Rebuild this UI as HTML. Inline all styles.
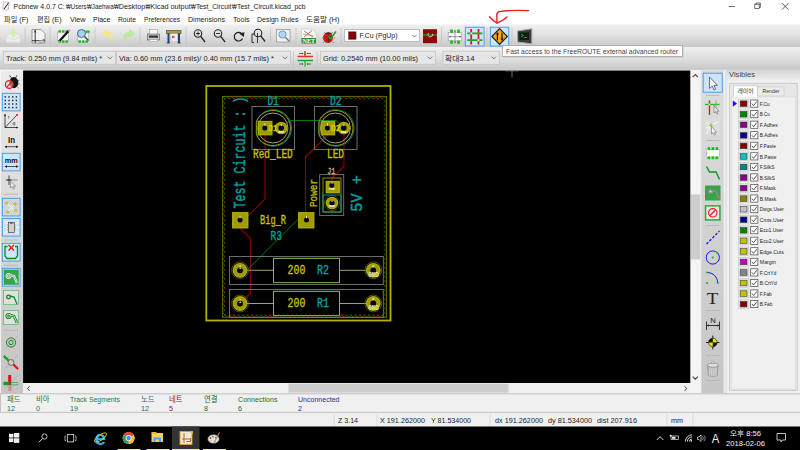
<!DOCTYPE html>
<html lang="ko"><head><meta charset="utf-8"><title>Pcbnew 4.0.7</title>
<style>
html,body{margin:0;padding:0;background:#000;overflow:hidden}
svg{display:block;font-family:"Liberation Sans", "Noto Sans CJK KR", sans-serif;}
text{white-space:pre}
</style></head><body>
<svg width="800" height="450" viewBox="0 0 800 450">
<defs>
<linearGradient id="tb" x1="0" y1="0" x2="0" y2="1"><stop offset="0" stop-color="#f1f1f1"/><stop offset="0.5" stop-color="#dfdfdf"/><stop offset="1" stop-color="#c7c7c7"/></linearGradient>
<linearGradient id="vtb" x1="0" y1="0" x2="0" y2="1"><stop offset="0" stop-color="#ececec"/><stop offset="1" stop-color="#c4c4c4"/></linearGradient>
<linearGradient id="vtb2" x1="0" y1="0" x2="0" y2="1"><stop offset="0" stop-color="#dddddd"/><stop offset="1" stop-color="#c6c6c6"/></linearGradient>
<linearGradient id="cap" x1="0" y1="0" x2="0" y2="1"><stop offset="0" stop-color="#d4d4d4"/><stop offset="1" stop-color="#eeeeee"/></linearGradient>
<pattern id="hatch" width="4.5" height="4.5" patternUnits="userSpaceOnUse"><rect width="4.5" height="4.5" fill="#000"/><path d="M0 4.5L4.5 0" stroke="#a80000" stroke-width="0.9"/><path d="M0 0L4.5 4.5" stroke="#009800" stroke-width="0.9"/></pattern>
</defs>
<rect x="0" y="0" width="800" height="450" fill="#f0f0f0"/>
<rect x="0" y="24" width="800" height="23.5" fill="url(#tb)"/>
<rect x="0" y="47" width="800" height="22.8" fill="url(#tb)"/>
<rect x="0" y="0" width="800" height="24.4" fill="#fff"/>
<rect x="0" y="69.8" width="24" height="324" fill="url(#vtb)"/>
<rect x="0" y="69.8" width="24" height="0.9" fill="#f8f8f8"/>
<rect x="0" y="69.8" width="0.9" height="323.7" fill="#f4f4f4"/>
<rect x="23" y="382" width="668" height="11.2" fill="#f0f0f0"/>
<rect x="288.5" y="383.8" width="220" height="8.8" fill="#cdcdcd"/>
<rect x="689" y="70" width="12" height="323.2" fill="#f4f4f4"/>
<rect x="691" y="194.4" width="9.3" height="65" fill="#cdcdcd"/>
<rect x="701" y="70" width="22.8" height="323.2" fill="url(#vtb2)"/>
<rect x="723.8" y="70" width="76.2" height="324.5" fill="#f0f0f0"/>
<rect x="23.1" y="70.5" width="667.2" height="312.5" fill="#000"/>
<rect x="0" y="393.5" width="800" height="33.5" fill="#f0f0f0"/>
<rect x="0" y="426.5" width="800" height="23.5" fill="#000"/>
<g id="pcb">
<rect x="206.3" y="86" width="184.2" height="234.5" fill="none" stroke="#b4b000" stroke-width="1.8"/>
<path d="M222 96H387V317.6H222Z M225.2 99.2V314.400H383.8V99.2Z" fill="url(#hatch)" fill-rule="evenodd" opacity="0.9"/>
<rect x="222.4" y="96.4" width="164.2" height="220.8" fill="none" stroke="#706c00" stroke-width="0.9"/>
<path d="M265 128V199L247 217H240" fill="none" stroke="#880000" stroke-width="1.15" stroke-linejoin="round"/>
<path d="M240 221V228L250.5 238.5V293L245 298.5L240 303.5" fill="none" stroke="#880000" stroke-width="1.15" stroke-linejoin="round"/>
<path d="M327.5 128V135L305.5 157V219" fill="none" stroke="#880000" stroke-width="1.15" stroke-linejoin="round"/>
<path d="M344 128V166L332 178V186" fill="none" stroke="#880000" stroke-width="1.15" stroke-linejoin="round"/>
<path d="M281 128L286.5 123L291 120.5H336L340.5 124.5L344 128" fill="none" stroke="#008800" stroke-width="0.9"/>
<path d="M306.5 220L298 219.4L247 270.3H240" fill="none" stroke="#008800" stroke-width="0.9"/>
<rect x="252" y="106.5" width="42.5" height="43" fill="none" stroke="#787878" stroke-width="0.9"/>
<rect x="314.5" y="106.5" width="42.5" height="43" fill="none" stroke="#787878" stroke-width="0.9"/>
<rect x="319.7" y="174.6" width="24" height="40.8" fill="none" stroke="#787878" stroke-width="0.9"/>
<rect x="229.5" y="256.5" width="153.8" height="28" fill="none" stroke="#787878" stroke-width="0.9"/>
<rect x="229.5" y="289.5" width="153.8" height="28" fill="none" stroke="#787878" stroke-width="0.9"/>
<path d="M256.7 120.3A18.3 18.3 0 1 1 256.7 135.7Z" fill="none" stroke="#008484" stroke-width="0.9"/>
<path d="M256.3 122.2A17.6 17.6 0 1 1 256.3 133.8Z" fill="none" stroke="#989800" stroke-width="1"/>
<circle cx="272.9" cy="128" r="15" fill="none" stroke="#b4b47a" stroke-width="0.9"/>
<path d="M319.2 120.3A18.3 18.3 0 1 1 319.2 135.7Z" fill="none" stroke="#008484" stroke-width="0.9"/>
<path d="M318.8 122.2A17.6 17.6 0 1 1 318.8 133.8Z" fill="none" stroke="#989800" stroke-width="1"/>
<circle cx="335.4" cy="128" r="15" fill="none" stroke="#b4b47a" stroke-width="0.9"/>
<rect x="257.6" y="120.8" width="15" height="14.6" fill="#a09c00"/>
<rect x="258.6" y="121.8" width="13" height="12.6" fill="none" stroke="#b8b400" stroke-width="0.6"/>
<circle cx="264.8" cy="127.9" r="2.5" fill="#000024"/>
<circle cx="281.2" cy="128" r="6.3" fill="#a09c00"/>
<circle cx="281.2" cy="128" r="5.5" fill="none" stroke="#c0bc10" stroke-width="0.5"/>
<circle cx="281.2" cy="128" r="2.8" fill="#000024"/>
<rect x="320.7" y="120.8" width="14.6" height="14.6" fill="#a09c00"/>
<rect x="321.7" y="121.8" width="12.6" height="12.6" fill="none" stroke="#b8b400" stroke-width="0.6"/>
<circle cx="327.4" cy="127.9" r="2.5" fill="#000024"/>
<circle cx="343.8" cy="128" r="6.3" fill="#a09c00"/>
<circle cx="343.8" cy="128" r="5.5" fill="none" stroke="#c0bc10" stroke-width="0.5"/>
<circle cx="343.8" cy="128" r="2.8" fill="#000024"/>
<rect x="323" y="178" width="18" height="34" fill="none" stroke="#a0a000" stroke-width="0.9"/>
<rect x="323" y="195" width="18" height="17" fill="none" stroke="#009c9c" stroke-width="0.9"/>
<rect x="325.6" y="180.8" width="14.4" height="12.6" fill="#a09c00"/>
<rect x="326.6" y="181.8" width="12.4" height="10.6" fill="none" stroke="#b8b400" stroke-width="0.6"/>
<circle cx="331.8" cy="185.3" r="2.5" fill="#000024"/>
<circle cx="332" cy="203" r="6.3" fill="#a09c00"/>
<circle cx="332" cy="203" r="5.5" fill="none" stroke="#c0bc10" stroke-width="0.5"/>
<circle cx="332" cy="203" r="2.6" fill="#000024"/>
<circle cx="332" cy="203" r="7.6" fill="none" stroke="#6a6a00" stroke-width="0.6"/>
<rect x="232" y="212" width="16.5" height="16.5" fill="#a09c00"/>
<rect x="233" y="213" width="14.5" height="14.5" fill="none" stroke="#b8b400" stroke-width="0.6"/>
<circle cx="240" cy="220" r="2.5" fill="#000024"/>
<rect x="298" y="212" width="16.5" height="16.5" fill="#a09c00"/>
<rect x="299" y="213" width="14.5" height="14.5" fill="none" stroke="#b8b400" stroke-width="0.6"/>
<circle cx="306.5" cy="220" r="2.5" fill="#000024"/>
<line x1="240" y1="270.3" x2="273.5" y2="270.3" stroke="#b4b47a" stroke-width="0.9" />
<line x1="339.5" y1="270.3" x2="373" y2="270.3" stroke="#b4b47a" stroke-width="0.9" />
<rect x="273.5" y="258.5" width="66" height="24" fill="none" stroke="#b4b47a" stroke-width="0.9"/>
<line x1="273.5" y1="258.2" x2="339.5" y2="258.2" stroke="#40a040" stroke-width="0.8" />
<line x1="273.5" y1="282.7" x2="339.5" y2="282.7" stroke="#40a040" stroke-width="0.7" />
<circle cx="240" cy="270.3" r="8.4" fill="none" stroke="#707000" stroke-width="0.7"/>
<circle cx="240" cy="270.3" r="7.4" fill="#a09c00"/>
<circle cx="240" cy="270.3" r="6.6000000000000005" fill="none" stroke="#c0bc10" stroke-width="0.5"/>
<circle cx="240" cy="270.3" r="2.9" fill="#000024"/>
<circle cx="373.3" cy="270.3" r="8.4" fill="none" stroke="#707000" stroke-width="0.7"/>
<circle cx="373.3" cy="270.3" r="7.4" fill="#a09c00"/>
<circle cx="373.3" cy="270.3" r="6.6000000000000005" fill="none" stroke="#c0bc10" stroke-width="0.5"/>
<circle cx="373.3" cy="270.3" r="2.9" fill="#000024"/>
<line x1="240" y1="303.5" x2="273.5" y2="303.5" stroke="#b4b47a" stroke-width="0.9" />
<line x1="339.5" y1="303.5" x2="373" y2="303.5" stroke="#b4b47a" stroke-width="0.9" />
<rect x="273.5" y="291.5" width="66" height="24" fill="none" stroke="#b4b47a" stroke-width="0.9"/>
<line x1="273.5" y1="291.2" x2="339.5" y2="291.2" stroke="#40a040" stroke-width="0.8" />
<line x1="273.5" y1="315.7" x2="339.5" y2="315.7" stroke="#40a040" stroke-width="0.7" />
<circle cx="240" cy="303.5" r="8.4" fill="none" stroke="#707000" stroke-width="0.7"/>
<circle cx="240" cy="303.5" r="7.4" fill="#a09c00"/>
<circle cx="240" cy="303.5" r="6.6000000000000005" fill="none" stroke="#c0bc10" stroke-width="0.5"/>
<circle cx="240" cy="303.5" r="2.9" fill="#000024"/>
<circle cx="373.3" cy="303.5" r="8.4" fill="none" stroke="#707000" stroke-width="0.7"/>
<circle cx="373.3" cy="303.5" r="7.4" fill="#a09c00"/>
<circle cx="373.3" cy="303.5" r="6.6000000000000005" fill="none" stroke="#c0bc10" stroke-width="0.5"/>
<circle cx="373.3" cy="303.5" r="2.9" fill="#000024"/>
<text x="267.5" y="105.4" font-size="12" fill="#00a0a0" textLength="11.2" lengthAdjust="spacingAndGlyphs" font-family='"Liberation Mono", monospace'  stroke="#00a0a0" stroke-width="0.35" stroke-linejoin="round">D1</text>
<text x="330" y="105.4" font-size="12" fill="#00a0a0" textLength="11.6" lengthAdjust="spacingAndGlyphs" font-family='"Liberation Mono", monospace'  stroke="#00a0a0" stroke-width="0.35" stroke-linejoin="round">D2</text>
<text x="253" y="157.8" font-size="12" fill="#c2c200" textLength="39.8" lengthAdjust="spacingAndGlyphs" font-family='"Liberation Mono", monospace'  stroke="#c2c200" stroke-width="0.35" stroke-linejoin="round">Red_LED</text>
<text x="327" y="157.8" font-size="12" fill="#c2c200" textLength="17" lengthAdjust="spacingAndGlyphs" font-family='"Liberation Mono", monospace'  stroke="#c2c200" stroke-width="0.35" stroke-linejoin="round">LED</text>
<text x="327.3" y="174.3" font-size="9.8" fill="#c2c28a" textLength="8" lengthAdjust="spacingAndGlyphs" font-family='"Liberation Mono", monospace'  stroke="#c2c28a" stroke-width="0.3" stroke-linejoin="round">J1</text>
<text x="260" y="223.8" font-size="12" fill="#c2c200" textLength="26" lengthAdjust="spacingAndGlyphs" font-family='"Liberation Mono", monospace'  stroke="#c2c200" stroke-width="0.35" stroke-linejoin="round">Big_R</text>
<text x="270.6" y="240" font-size="12" fill="#00a0a0" textLength="11.3" lengthAdjust="spacingAndGlyphs" font-family='"Liberation Mono", monospace'  stroke="#00a0a0" stroke-width="0.35" stroke-linejoin="round">R3</text>
<text x="287.6" y="274" font-size="12" fill="#c2c200" textLength="17.8" lengthAdjust="spacingAndGlyphs" font-family='"Liberation Mono", monospace'  stroke="#c2c200" stroke-width="0.35" stroke-linejoin="round">200</text>
<text x="317" y="274" font-size="12" fill="#00a0a0" textLength="12" lengthAdjust="spacingAndGlyphs" font-family='"Liberation Mono", monospace'  stroke="#00a0a0" stroke-width="0.35" stroke-linejoin="round">R2</text>
<text x="287.6" y="307.2" font-size="12" fill="#c2c200" textLength="17.8" lengthAdjust="spacingAndGlyphs" font-family='"Liberation Mono", monospace'  stroke="#c2c200" stroke-width="0.35" stroke-linejoin="round">200</text>
<text x="317" y="307.2" font-size="12" fill="#00a0a0" textLength="12" lengthAdjust="spacingAndGlyphs" font-family='"Liberation Mono", monospace'  stroke="#00a0a0" stroke-width="0.35" stroke-linejoin="round">R1</text>
<text x="317" y="207" font-size="11" fill="#c2c200" textLength="28" lengthAdjust="spacingAndGlyphs" font-family='"Liberation Mono", monospace' transform="rotate(-90 317 207)" stroke="#c2c200" stroke-width="0.3" stroke-linejoin="round">Power</text>
<text x="362" y="211.7" font-size="16.6" fill="#00a0a0" textLength="36.7" lengthAdjust="spacingAndGlyphs" font-family='"Liberation Mono", monospace' transform="rotate(-90 362 211.7)" stroke="#00a0a0" stroke-width="0.45" stroke-linejoin="round">5V +</text>
<text x="244.8" y="208.5" font-size="16.8" fill="#00a0a0" textLength="112" lengthAdjust="spacingAndGlyphs" font-family='"Liberation Mono", monospace' transform="rotate(-90 244.8 208.5)" stroke="#00a0a0" stroke-width="0.45" stroke-linejoin="round">Test Circuit : )</text>
<text x="268.6" y="131.3" font-size="9" fill="#d2d200" textLength="8.6" lengthAdjust="spacingAndGlyphs" font-family='"Liberation Mono", monospace'  stroke="#d2d200" stroke-width="0.4" stroke-linejoin="round">D1</text>
<text x="331.2" y="131.3" font-size="9" fill="#d2d200" textLength="9.2" lengthAdjust="spacingAndGlyphs" font-family='"Liberation Mono", monospace'  stroke="#d2d200" stroke-width="0.4" stroke-linejoin="round">D2</text>
<text x="373.3" y="266.7" font-size="4.2" fill="#f0f0e0" text-anchor="middle" font-weight="bold" font-family='"Liberation Mono", monospace'>2</text>
<text x="373.5" y="276.90000000000003" font-size="6.4" fill="#e6e6b4" textLength="10.6" lengthAdjust="spacingAndGlyphs" text-anchor="middle" font-weight="bold" font-family='"Liberation Mono", monospace'>GND</text>
<text x="373.3" y="299.9" font-size="4.2" fill="#f0f0e0" text-anchor="middle" font-weight="bold" font-family='"Liberation Mono", monospace'>2</text>
<text x="373.5" y="310.1" font-size="6.4" fill="#e6e6b4" textLength="10.6" lengthAdjust="spacingAndGlyphs" text-anchor="middle" font-weight="bold" font-family='"Liberation Mono", monospace'>GND</text>
<text x="240" y="269.3" font-size="4.5" fill="#fff" text-anchor="middle" font-family='"Liberation Mono", monospace'>1</text>
<text x="240" y="302.5" font-size="4.5" fill="#fff" text-anchor="middle" font-family='"Liberation Mono", monospace'>1</text>
<text x="332" y="201.5" font-size="3.5" fill="#fff" text-anchor="middle" font-family='"Liberation Mono", monospace'>2</text>
<text x="332" y="206.5" font-size="3.5" fill="#fff" textLength="6.5" lengthAdjust="spacingAndGlyphs" text-anchor="middle" font-weight="bold" font-family='"Liberation Mono", monospace'>GND</text>
<text x="331.8" y="184" font-size="3.5" fill="#fff" text-anchor="middle" font-family='"Liberation Mono", monospace'>1</text>
<text x="331.8" y="189.5" font-size="3.2" fill="#fff" textLength="6" lengthAdjust="spacingAndGlyphs" text-anchor="middle" font-weight="bold" font-family='"Liberation Mono", monospace'>PWR</text>
<rect x="264.40000000000003" y="123.3" width="0.9" height="2.4" fill="#e8e8e8"/>
<rect x="327.0" y="123.3" width="0.9" height="2.4" fill="#e8e8e8"/>
<rect x="280.8" y="123.8" width="0.9" height="2.4" fill="#e8e8e8"/>
<rect x="343.40000000000003" y="123.8" width="0.9" height="2.4" fill="#e8e8e8"/>
<rect x="239.6" y="215.8" width="0.9" height="2.4" fill="#e8e8e8"/>
<rect x="306.1" y="215.8" width="0.9" height="2.4" fill="#e8e8e8"/>
<text x="281.2" y="132.5" font-size="3" fill="#fff" textLength="6" lengthAdjust="spacingAndGlyphs" text-anchor="middle" font-weight="bold" font-family='"Liberation Mono", monospace'>GND</text>
<text x="343.8" y="132.5" font-size="3" fill="#fff" textLength="6" lengthAdjust="spacingAndGlyphs" text-anchor="middle" font-weight="bold" font-family='"Liberation Mono", monospace'>GND</text>
<line x1="505" y1="70.8" x2="519" y2="70.8" stroke="#8a8a8a" stroke-width="0.8" />
<line x1="512" y1="70.5" x2="512" y2="77.5" stroke="#8a8a8a" stroke-width="0.8" />
</g>
<g id="main-toolbar">
<line x1="25" y1="27.5" x2="25" y2="44.5" stroke="#c4c4c4" stroke-width="0.8" />
<line x1="50" y1="27.5" x2="50" y2="44.5" stroke="#c4c4c4" stroke-width="0.8" />
<line x1="95" y1="27.5" x2="95" y2="44.5" stroke="#c4c4c4" stroke-width="0.8" />
<line x1="140" y1="27.5" x2="140" y2="44.5" stroke="#c4c4c4" stroke-width="0.8" />
<line x1="186" y1="27.5" x2="186" y2="44.5" stroke="#c4c4c4" stroke-width="0.8" />
<line x1="270.5" y1="27.5" x2="270.5" y2="44.5" stroke="#c4c4c4" stroke-width="0.8" />
<line x1="296" y1="27.5" x2="296" y2="44.5" stroke="#c4c4c4" stroke-width="0.8" />
<line x1="341" y1="27.5" x2="341" y2="44.5" stroke="#c4c4c4" stroke-width="0.8" />
<line x1="441.5" y1="27.5" x2="441.5" y2="44.5" stroke="#c4c4c4" stroke-width="0.8" />
<line x1="487" y1="27.5" x2="487" y2="44.5" stroke="#c4c4c4" stroke-width="0.8" />
<line x1="512" y1="27.5" x2="512" y2="44.5" stroke="#c4c4c4" stroke-width="0.8" />
<path d="M6.200 37.5L8.800 33.5H17.700L20.300 37.5V41.500Q20.300 42.500 19.300 42.500H7.200Q6.200 42.500 6.200 41.500Z" fill="#ececec" stroke="#d8d8d8" stroke-width="0.6"/>
<path d="M11.300 28.800H15.300V32.600H17.800L13.300 37.300L8.800 32.600H11.300Z" fill="#d4ecb8"/>
<path d="M6.500 38H10.500L11.300 39.500H15.300L16 38H20" fill="none" stroke="#dcdcdc" stroke-width="0.6"/>
<path d="M32 29.5H41L45 33.5V43H32Z" fill="#f4f4f4" stroke="#777" stroke-width="0.7"/>
<path d="M35.200 30V43M32 40.700H45" fill="none" stroke="#222" stroke-width="0.9"/>
<path d="M35 30.5L34 32.5M35 30.5L36 32.5M44.5 40L42.5 39M44.5 40L42.5 41" fill="none" stroke="#222" stroke-width="0.6"/>
<rect x="39.5" y="40.5" width="4.5" height="2" fill="#ccc" stroke="#888" stroke-width="0.4"/>
<rect x="57.5" y="32" width="11" height="9" fill="#f4f4f4" stroke="#999" stroke-width="0.5"/>
<rect x="58.5" y="30.2" width="2.4" height="2.4" fill="#10c010"/>
<rect x="58.5" y="40.4" width="2.4" height="2.4" fill="#10c010"/>
<rect x="62" y="30.2" width="2.4" height="2.4" fill="#10c010"/>
<rect x="62" y="40.4" width="2.4" height="2.4" fill="#10c010"/>
<rect x="65.5" y="30.2" width="2.4" height="2.4" fill="#10c010"/>
<rect x="65.5" y="40.4" width="2.4" height="2.4" fill="#10c010"/>
<path d="M59 41.5L68.5 31" fill="none" stroke="#111" stroke-width="2.2"/>
<circle cx="69" cy="30.6" r="1.2" fill="#e070d0"/>
<path d="M58 42.6L59.6 40.4L60.6 41.6Z" fill="#f0e070"/>
<rect x="77.5" y="33" width="11" height="8" fill="#f4f4f4" stroke="#999" stroke-width="0.5"/>
<rect x="78.5" y="40.4" width="2.4" height="2.4" fill="#10c010"/>
<rect x="82" y="40.4" width="2.4" height="2.4" fill="#10c010"/>
<rect x="85.5" y="40.4" width="2.4" height="2.4" fill="#10c010"/>
<rect x="85.5" y="30.4" width="2.4" height="2.4" fill="#10c010"/>
<rect x="88" y="30.4" width="1.6" height="2.4" fill="#10c010"/>
<circle cx="81.5" cy="33.5" r="4" fill="#a8d0f0" stroke="#3a6a9a" stroke-width="1"/>
<line x1="84.5" y1="36.5" x2="88.5" y2="40.5" stroke="#444" stroke-width="1.4" />
<path d="M102 33.5L107 29.5V32C111.5 32 113.5 35.5 112 41.5C111.5 38 110 36 107 36V38Z" fill="#f3e88c" stroke="#efe070" stroke-width="0.4"/>
<path d="M134.5 33.5L129.5 29.5V32C125 32 123 35.5 124.5 41.5C125 38 126.500 36 129.5 36V38Z" fill="#bfeaa0" stroke="#aee090" stroke-width="0.4"/>
<rect x="149.5" y="29.5" width="8" height="5" fill="#fafafa" stroke="#888" stroke-width="0.5"/>
<rect x="147.5" y="34" width="12" height="6" fill="#c8c8c8" stroke="#555" stroke-width="0.6"/>
<rect x="149" y="35.5" width="9" height="2.2" fill="#333"/>
<rect x="149.5" y="39.5" width="8" height="2.2" fill="#f4f4f4" stroke="#888" stroke-width="0.4"/>
<rect x="166.5" y="30.5" width="14.5" height="3" fill="#a09c50" stroke="#55521c" stroke-width="0.7"/>
<rect x="167.5" y="33.5" width="2" height="9.5" fill="#24406c"/>
<rect x="178" y="33.5" width="2" height="9.5" fill="#24406c"/>
<rect x="166.8" y="42.4" width="3.4" height="1" fill="#24406c"/>
<rect x="177.3" y="42.4" width="3.4" height="1" fill="#24406c"/>
<path d="M170.5 33.5H177.5V41.5H173L170.5 39Z" fill="#f0f0f0" stroke="#aaa" stroke-width="0.4"/>
<path d="M172 35.5L175.5 37L172 38.5Z" fill="#d04050"/>
<circle cx="198" cy="33.5" r="3.7" fill="none" stroke="#222" stroke-width="1.1"/>
<line x1="200.59" y1="36.09" x2="205" y2="42" stroke="#222" stroke-width="1.3" />
<path d="M196 33.5H200M198 31.5V35.5" fill="none" stroke="#222" stroke-width="0.9"/>
<circle cx="218" cy="33.5" r="3.7" fill="none" stroke="#222" stroke-width="1.1"/>
<line x1="220.59" y1="36.09" x2="225" y2="42" stroke="#222" stroke-width="1.3" />
<path d="M216 33.5H220" fill="none" stroke="#222" stroke-width="0.9"/>
<path d="M241.5 33.5A4.3 4.3 0 1 0 242.5 38.5" fill="none" stroke="#222" stroke-width="1.2"/>
<path d="M239 33.5L244.5 32.2L243.8 37Z" fill="#222"/>
<circle cx="258" cy="33" r="3.8" fill="none" stroke="#222" stroke-width="1.1"/>
<line x1="260.66" y1="35.66" x2="265" y2="41.5" stroke="#222" stroke-width="1.3" />
<path d="M254 34H252V42.5H254M257.5 33V43" fill="none" stroke="#222" stroke-width="0.9"/>
<rect x="276.5" y="29.5" width="13.5" height="12.5" fill="#f0f0f0" stroke="#9a9a9a" stroke-width="0.8"/>
<circle cx="282.5" cy="34.5" r="3.6" fill="#b4d4f4" stroke="#6a8ab0" stroke-width="0.8"/>
<line x1="285.3" y1="37.3" x2="289.3" y2="41.3" stroke="#777" stroke-width="1.3" />
<path d="M301.5 29H312L316 32.5V43.5H301.5Z" fill="#f8f8f8" stroke="#bbb" stroke-width="0.5"/>
<path d="M304 31L313 37M304 37L312 30.5" fill="none" stroke="#c03030" stroke-width="0.7"/>
<line x1="303" y1="34" x2="314" y2="36" stroke="#40a040" stroke-width="0.5" />
<rect x="301.5" y="38" width="14.5" height="5.5" fill="#2e8a3a"/>
<text x="308.8" y="42.8" font-size="5.6" fill="#fff" textLength="12.5" lengthAdjust="spacingAndGlyphs" text-anchor="middle" font-weight="bold" font-family='"Liberation Serif", serif'>NET</text>
<ellipse cx="328" cy="37.8" rx="5" ry="5.3" fill="#d81818"/>
<path d="M324.5 33.8A4.6 3 0 0 1 332.5 33.8Z" fill="#222"/>
<line x1="328.5" y1="34" x2="328.5" y2="42.5" stroke="#222" stroke-width="0.6" />
<circle cx="326.5" cy="37" r="0.7" fill="#222"/>
<circle cx="330.5" cy="37" r="0.7" fill="#222"/>
<circle cx="326.8" cy="40" r="0.7" fill="#222"/>
<circle cx="330.2" cy="40" r="0.7" fill="#222"/>
<path d="M324 32L326 34M333 32L331 34M323.5 38H322M333.5 38H335M324.5 41.5L323 43M332.5 41.5L334 43" fill="none" stroke="#444" stroke-width="0.5"/>
<path d="M328.3 36L330.6 38.8L336 31.5" fill="none" stroke="#18a028" stroke-width="1.5"/>
<rect x="423" y="29.2" width="14" height="14" fill="#8c0a0a"/>
<line x1="423" y1="35" x2="437" y2="35" stroke="#18a018" stroke-width="1.4" />
<path d="M428.5 33.2A2.3 2.3 0 1 0 432.5 33.8" fill="none" stroke="#e8e8e8" stroke-width="0.8"/>
<rect x="448.2" y="32.6" width="13.4" height="8.2" fill="#fafafa" stroke="#9a9a9a" stroke-width="0.6"/>
<rect x="450.2" y="29.6" width="2.7" height="3.2" fill="#10c010"/>
<rect x="450.2" y="40.6" width="2.7" height="3.2" fill="#10c010"/>
<rect x="457.2" y="29.6" width="2.7" height="3.2" fill="#10c010"/>
<rect x="457.2" y="40.6" width="2.7" height="3.2" fill="#10c010"/>
<path d="M449 36.700H461M455 30.5V43" fill="none" stroke="#666" stroke-width="0.6"/>
<path d="M448.600 36.700L450.400 35.700V37.700ZM461.400 36.700L459.600 35.700V37.700ZM455 29.800L454 31.600H456ZM455 43.600L454 41.800H456Z" fill="#555"/>
<rect x="465.3" y="27.2" width="18.8" height="18.8" fill="#cfe4f7" stroke="#3b97e8" stroke-width="0.9"/>
<path d="M471.200 29V44.5M478.500 29V44.5" fill="none" stroke="#e01818" stroke-width="1.8"/>
<path d="M467.200 33.400H482.500M467.200 40.200H482.500" fill="none" stroke="#10b010" stroke-width="1.8"/>
<circle cx="471.2" cy="33.4" r="1.1" fill="#f4f4f4" stroke="#888" stroke-width="0.4"/>
<circle cx="478.5" cy="40.2" r="1.1" fill="#f4f4f4" stroke="#888" stroke-width="0.4"/>
<rect x="490.3" y="27.2" width="18.5" height="18.8" fill="#cfe4f7" stroke="#3b97e8" stroke-width="0.9"/>
<path d="M499.6 28.600L507.400 36.500L499.6 44.400L491.800 36.500Z" fill="#f4a81c" stroke="#1a1a1a" stroke-width="1.1"/>
<path d="M497.400 40.200V33.5M502 32.800V39.5" fill="none" stroke="#111" stroke-width="1.2"/>
<path d="M497.5 32L496 34.5H499ZM502 41L500.500 38.5H503.5Z" fill="#111"/>
<path d="M517.500 31L531.800 28.800V43.800L517.500 42Z" fill="#3c3c3c" stroke="#a4a4a4" stroke-width="1"/>
<rect x="519.5" y="32.5" width="9.5" height="7.5" fill="#0c1c0c"/>
<path d="M521 34L523.500 35.5L521 37M524 37.5H527" fill="none" stroke="#30c830" stroke-width="0.8"/>
</g>
<g id="aux-icons">
<line x1="293.5" y1="51" x2="293.5" y2="67" stroke="#c4c4c4" stroke-width="0.8" />
<line x1="317" y1="51" x2="317" y2="67" stroke="#c4c4c4" stroke-width="0.8" />
<line x1="297.5" y1="56.5" x2="313" y2="56.5" stroke="#e03030" stroke-width="1.5" />
<line x1="297.5" y1="60.5" x2="313" y2="60.5" stroke="#18a828" stroke-width="1.5" />
<path d="M305 51V56M305 61V66.500" fill="none" stroke="#18a828" stroke-width="1.2"/>
<path d="M305 51.500V55.5" fill="none" stroke="#e03030" stroke-width="1.2"/>
<path d="M299 53.5H303M307 53.5H311M299 64H303M307 64H311" fill="none" stroke="#333" stroke-width="0.7"/>
<path d="M303.500 53.5L302 52.700V54.3ZM306.500 53.5L308 52.700V54.3ZM303.500 64L302 63.200V64.8ZM306.500 64L308 63.200V64.8Z" fill="#333"/>
</g>
<g id="left-toolbar">
<ellipse cx="13.8" cy="82.6" rx="4.5" ry="5.6" fill="#141414"/>
<path d="M9.500 75.300L12.200 79M17 75.300L15 79" fill="none" stroke="#222" stroke-width="0.8"/>
<path d="M18 81L19.500 80M18.300 84H19.800M17.500 87L18.800 88.200" fill="none" stroke="#222" stroke-width="0.6"/>
<circle cx="9.3" cy="84.5" r="3.9" fill="#f0d0d0" stroke="#d82020" stroke-width="1.2" fill-opacity="0.55"/>
<line x1="6.7" y1="87.1" x2="11.9" y2="81.9" stroke="#d82020" stroke-width="1.2" />
<rect x="2.3" y="93.3" width="17.8" height="17.6" fill="#cfe4f7" stroke="#3b97e8" stroke-width="0.9"/>
<rect x="4.6" y="96.2" width="1.4" height="1.4" fill="#1a1a2a"/>
<rect x="4.6" y="99.75" width="1.4" height="1.4" fill="#1a1a2a"/>
<rect x="4.6" y="103.3" width="1.4" height="1.4" fill="#1a1a2a"/>
<rect x="4.6" y="106.85" width="1.4" height="1.4" fill="#1a1a2a"/>
<rect x="8.3" y="96.2" width="1.4" height="1.4" fill="#1a1a2a"/>
<rect x="8.3" y="99.75" width="1.4" height="1.4" fill="#1a1a2a"/>
<rect x="8.3" y="103.3" width="1.4" height="1.4" fill="#1a1a2a"/>
<rect x="8.3" y="106.85" width="1.4" height="1.4" fill="#1a1a2a"/>
<rect x="12.0" y="96.2" width="1.4" height="1.4" fill="#1a1a2a"/>
<rect x="12.0" y="99.75" width="1.4" height="1.4" fill="#1a1a2a"/>
<rect x="12.0" y="103.3" width="1.4" height="1.4" fill="#1a1a2a"/>
<rect x="12.0" y="106.85" width="1.4" height="1.4" fill="#1a1a2a"/>
<rect x="15.700000000000001" y="96.2" width="1.4" height="1.4" fill="#1a1a2a"/>
<rect x="15.700000000000001" y="99.75" width="1.4" height="1.4" fill="#1a1a2a"/>
<rect x="15.700000000000001" y="103.3" width="1.4" height="1.4" fill="#1a1a2a"/>
<rect x="15.700000000000001" y="106.85" width="1.4" height="1.4" fill="#1a1a2a"/>
<path d="M5 114.5V127.500H17.500" fill="none" stroke="#222" stroke-width="0.8"/>
<path d="M5 113.5L4 116H6ZM18.5 127.500L16 126.500V128.500Z" fill="#222"/>
<line x1="5" y1="127.5" x2="16.5" y2="115.5" stroke="#222" stroke-width="0.8" />
<circle cx="17" cy="115" r="1.1" fill="#e81818"/>
<text x="8" y="119" font-size="4.5" fill="#222">r</text>
<text x="12.5" y="125" font-size="4.5" fill="#222">φ</text>
<text x="11.5" y="142.8" font-size="8.6" fill="#111" textLength="7" lengthAdjust="spacingAndGlyphs" text-anchor="middle" font-weight="bold">In</text>
<path d="M5.500 146.700H17.500" fill="none" stroke="#111" stroke-width="0.7"/>
<path d="M4.500 146.700L7 145.500V147.900ZM18.5 146.700L16 145.500V147.900Z" fill="#111"/>
<rect x="2.3" y="153.3" width="17.8" height="17.6" fill="#cfe4f7" stroke="#3b97e8" stroke-width="0.9"/>
<text x="11.3" y="162.8" font-size="8" fill="#111" textLength="13" lengthAdjust="spacingAndGlyphs" text-anchor="middle" font-weight="bold">mm</text>
<path d="M5.500 166.500H17.500" fill="none" stroke="#111" stroke-width="0.7"/>
<path d="M4.500 166.500L7 165.300V167.700ZM18.5 166.500L16 165.300V167.700Z" fill="#111"/>
<path d="M5.500 180H17.500" fill="none" stroke="#555" stroke-width="0.6"/>
<path d="M9 175.500V185" fill="none" stroke="#222" stroke-width="0.8"/>
<path d="M6.500 180H11.500" fill="none" stroke="#222" stroke-width="0.9"/>
<path d="M10.500 181.500V188L12.200 186.500L13.500 189L14.500 188.500L13.300 186.200L15.500 186Z" fill="#eee" stroke="#555" stroke-width="0.5"/>
<line x1="4" y1="194.3" x2="18" y2="194.3" stroke="#b4b4b4" stroke-width="0.8" />
<rect x="2.3" y="198.3" width="17.8" height="17.6" fill="#cfe4f7" stroke="#3b97e8" stroke-width="0.9"/>
<rect x="3.5" y="199.5" width="15.5" height="15.2" fill="#d4d4d4"/>
<path d="M6.500 203L15.5 211.5M15 204L7.500 211.5" fill="none" stroke="#fff" stroke-width="0.9"/>
<circle cx="6.5" cy="203" r="1.3" fill="#c8e010" stroke="#90a000" stroke-width="0.4"/>
<circle cx="15" cy="204" r="1.3" fill="#c8e010" stroke="#90a000" stroke-width="0.4"/>
<circle cx="7.5" cy="212" r="1.3" fill="#c8e010" stroke="#90a000" stroke-width="0.4"/>
<circle cx="15.5" cy="210.5" r="1.3" fill="#c8e010" stroke="#90a000" stroke-width="0.4"/>
<rect x="2.3" y="218.5" width="17.8" height="17.6" fill="#cfe4f7" stroke="#3b97e8" stroke-width="0.9"/>
<path d="M4 221L8.500 225M4 234L8.500 230M19 221L14.500 225M19 234L14.500 230M3.500 227.500H8M15 227.500H19.500" fill="none" stroke="#fff" stroke-width="0.8"/>
<rect x="8.5" y="222.5" width="5.8" height="10" fill="#d0d0d0" stroke="#444" stroke-width="0.7"/>
<path d="M8.500 225H7M8.500 227.500H7M8.500 230H7M14.300 225H15.800M14.300 227.500H15.800M14.300 230H15.800" fill="none" stroke="#e07020" stroke-width="0.8"/>
<rect x="10.3" y="222.5" width="2.2" height="1.3" fill="#444"/>
<line x1="4" y1="240" x2="18" y2="240" stroke="#b4b4b4" stroke-width="0.8" />
<rect x="2.3" y="243.3" width="17.8" height="17.8" fill="#cfe4f7" stroke="#3b97e8" stroke-width="0.9"/>
<path d="M7.500 246.500H5V256L7 258.5H15.500L17.500 256V246.500H15" fill="none" stroke="#0a8a1a" stroke-width="1.3"/>
<path d="M8.500 245L14 250.500M14 245L8.500 250.500" fill="none" stroke="#e01818" stroke-width="1.4"/>
<line x1="4" y1="265.3" x2="18" y2="265.3" stroke="#b4b4b4" stroke-width="0.8" />
<rect x="2.3" y="268.3" width="17.8" height="17.8" fill="#cfe4f7" stroke="#3b97e8" stroke-width="0.9"/>
<rect x="3.6" y="269.6" width="15.2" height="15.2" fill="#3aa24a"/>
<circle cx="8.5" cy="276.0" r="1.8" fill="none" stroke="#f4f4f4" stroke-width="2.2"/>
<path d="M10.0 275.0L14.0 276.0L17.0 283.0" fill="none" stroke="#f4f4f4" stroke-width="2.2"/>
<circle cx="8.5" cy="276.0" r="1.8" fill="none" stroke="#2a9a3a" stroke-width="0.6"/>
<path d="M10.0 275.0L14.0 276.0L17.0 283.0" fill="none" stroke="#2a9a3a" stroke-width="0.6"/>
<rect x="3.6" y="290.4" width="15" height="14.2" fill="#e0e0e0" stroke="#5ab06a" stroke-width="0.7"/>
<circle cx="8.5" cy="297.0" r="1.8" fill="none" stroke="#0a8a1a" stroke-width="1.3"/>
<path d="M10.0 296.0L14.0 297.0L17.0 304.0" fill="none" stroke="#0a8a1a" stroke-width="1.3"/>
<rect x="3.6" y="310.4" width="15" height="14.2" fill="#e0e0e0" stroke="#5ab06a" stroke-width="0.7"/>
<circle cx="8.5" cy="316.0" r="1.8" fill="none" stroke="#0a8a1a" stroke-width="2.6"/>
<path d="M10.0 315.0L14.0 316.0L17.0 323.0" fill="none" stroke="#0a8a1a" stroke-width="2.6"/>
<circle cx="8.5" cy="316.0" r="1.8" fill="none" stroke="#e8f4e8" stroke-width="0.8"/>
<path d="M10.0 315.0L14.0 316.0L17.0 323.0" fill="none" stroke="#e8f4e8" stroke-width="0.8"/>
<line x1="4" y1="330.3" x2="18" y2="330.3" stroke="#b4b4b4" stroke-width="0.8" />
<line x1="4.5" y1="349.5" x2="17.5" y2="336" stroke="#999" stroke-width="0.5" />
<circle cx="11" cy="342.5" r="4.6" fill="none" stroke="#0a8a1a" stroke-width="1"/>
<circle cx="11" cy="342.5" r="2.2" fill="none" stroke="#0a8a1a" stroke-width="0.9"/>
<line x1="4.5" y1="369" x2="17.5" y2="355.5" stroke="#999" stroke-width="0.5" />
<line x1="4.5" y1="356.5" x2="8.5" y2="360.5" stroke="#10a020" stroke-width="2.4" stroke-linecap="round"/>
<line x1="13.5" y1="364.5" x2="17.5" y2="368.5" stroke="#e01818" stroke-width="2.4" stroke-linecap="round"/>
<circle cx="11" cy="362.5" r="2.9" fill="#d8d8d8" stroke="#555" stroke-width="0.8"/>
<path d="M9.500 364L12.500 361" fill="none" stroke="#e0a010" stroke-width="1"/>
<line x1="4.5" y1="389" x2="17.5" y2="375.5" stroke="#999" stroke-width="0.5" />
<rect x="8.2" y="375" width="3" height="10" fill="#e01010"/>
<rect x="3.5" y="381.8" width="4.5" height="3.4" fill="#10a020"/>
<path d="M8 382.500H18.500M8 384.800H18.500" fill="none" stroke="#10a020" stroke-width="0.6"/>
<path d="M9 385.5V391M10.800 385.5V391" fill="none" stroke="#e01010" stroke-width="0.5"/>
</g>
<g id="right-toolbar">
<line x1="701.2" y1="70.5" x2="701.2" y2="393" stroke="#e4e4e4" stroke-width="0.8" />
<rect x="703.2" y="73.2" width="19" height="19" fill="#cfe4f7" stroke="#3b97e8" stroke-width="0.9"/>
<path d="M709.500 77V88.500L712.200 86L714 90L715.700 89.200L714 85.400H717.500Z" fill="#f4f4f4" stroke="#555" stroke-width="0.8"/>
<line x1="706" y1="95.5" x2="719.5" y2="95.5" stroke="#b4b4b4" stroke-width="0.8" />
<line x1="706" y1="140.5" x2="719.5" y2="140.5" stroke="#b4b4b4" stroke-width="0.8" />
<line x1="706" y1="225.5" x2="719.5" y2="225.5" stroke="#b4b4b4" stroke-width="0.8" />
<line x1="706" y1="310.5" x2="719.5" y2="310.5" stroke="#b4b4b4" stroke-width="0.8" />
<line x1="706" y1="355.5" x2="719.5" y2="355.5" stroke="#b4b4b4" stroke-width="0.8" />
<line x1="706" y1="380.5" x2="719.5" y2="380.5" stroke="#b4b4b4" stroke-width="0.8" />
<line x1="705" y1="104.5" x2="719.5" y2="104.5" stroke="#10c818" stroke-width="1.4" />
<line x1="709.5" y1="100.5" x2="709.5" y2="115" stroke="#e81818" stroke-width="1.4" />
<line x1="716" y1="100.5" x2="716" y2="113" stroke="#999" stroke-width="0.9" />
<circle cx="709.5" cy="104.5" r="0.9" fill="#fff"/>
<path d="M714 105.500V113L715.600 111.500L716.800 114L718 113.500L716.900 111.200H719Z" fill="#e4e4e4" stroke="#555" stroke-width="0.5"/>
<rect x="705" y="119.5" width="15" height="16" fill="#dcdcdc" stroke="none" stroke-width="1" rx="1.5"/>
<path d="M706 122L711 125.500M719 121.500L711 125.500M706 134L711 125.500M706 128L711 125.500" fill="none" stroke="#fafafa" stroke-width="1"/>
<circle cx="711" cy="125.2" r="1.3" fill="#c8e010" stroke="#8a9a00" stroke-width="0.4"/>
<path d="M711.500 126.500V134L713.100 132.500L714.300 135L715.500 134.500L714.400 132.200H716.500Z" fill="#f4f4f4" stroke="#555" stroke-width="0.5"/>
<rect x="706.3" y="149.5" width="13" height="7.6" fill="#fff" stroke="#999" stroke-width="0.4"/>
<rect x="707.6" y="147.2" width="2.6" height="2.8" fill="#10c010"/>
<rect x="707.6" y="156.4" width="2.6" height="2.8" fill="#10c010"/>
<rect x="711.6" y="147.2" width="2.6" height="2.8" fill="#10c010"/>
<rect x="711.6" y="156.4" width="2.6" height="2.8" fill="#10c010"/>
<rect x="715.6" y="147.2" width="2.6" height="2.8" fill="#10c010"/>
<rect x="715.6" y="156.4" width="2.6" height="2.8" fill="#10c010"/>
<path d="M706.300 152.300L707.500 153.300L706.300 154.300" fill="none" stroke="#666" stroke-width="0.5"/>
<path d="M706.500 166.500L709.500 172H716L719.500 179.500" fill="none" stroke="#0a9a1a" stroke-width="1.4"/>
<rect x="705" y="185.5" width="15.5" height="15" fill="#3aa24a"/>
<circle cx="710.5" cy="191.5" r="1.8" fill="none" stroke="#8c8c8c" stroke-width="1.5"/>
<path d="M712.0 190.5L716.0 191.5L719.0 198.5" fill="none" stroke="#8c8c8c" stroke-width="1.5"/>
<circle cx="710.5" cy="191.5" r="1.1" fill="#ddd"/>
<rect x="705.6" y="205.9" width="14.3" height="14" fill="#e2eae2" stroke="#2aa23a" stroke-width="1.5"/>
<rect x="706.8" y="207.1" width="11.9" height="11.6" fill="none" stroke="#e2eae2" stroke-width="0.8" stroke-dasharray="1 1"/>
<circle cx="712.8" cy="212.8" r="4.2" fill="#f4e8e8" stroke="#e02030" stroke-width="1.2"/>
<line x1="710" y1="215.5" x2="715.5" y2="210" stroke="#e02030" stroke-width="1.2" />
<line x1="706.5" y1="244" x2="719.5" y2="231" stroke="#1818e8" stroke-width="1.3" stroke-dasharray="2.6 1.6"/>
<circle cx="712.8" cy="257.5" r="6.6" fill="none" stroke="#1818e8" stroke-width="1"/>
<circle cx="712.8" cy="257.5" r="1.1" fill="#20b030"/>
<circle cx="717" cy="252.8" r="1.1" fill="#20b030"/>
<path d="M707.200 272.500C713 272.500 717.500 277 717.800 283" fill="none" stroke="#1818e8" stroke-width="1"/>
<circle cx="707.2" cy="272.5" r="1.1" fill="#20b030"/>
<circle cx="707.2" cy="283" r="1.1" fill="#20b030"/>
<circle cx="717.8" cy="283" r="1.1" fill="#20b030"/>
<text x="712.6" y="304.3" font-size="16" fill="#222" textLength="11.5" lengthAdjust="spacingAndGlyphs" text-anchor="middle" font-family='"Liberation Serif", serif'>T</text>
<path d="M706.500 321.500V330M719.500 321.500V330M706.500 325.500H719.500" fill="none" stroke="#222" stroke-width="0.9"/>
<path d="M706.500 325.500L709 324.500V326.500ZM719.500 325.500L717 324.500V326.500Z" fill="#222"/>
<text x="713" y="322.5" font-size="6.5" fill="#222" textLength="5.5" lengthAdjust="spacingAndGlyphs" text-anchor="middle">N</text>
<path d="M706 342.500H719.500M712.8 335.600V349.400" fill="none" stroke="#111" stroke-width="0.9"/>
<circle cx="712.8" cy="342.5" r="4.3" fill="#e8e010" stroke="#111" stroke-width="0.6"/>
<path d="M712.8 342.500V338.200A4.300 4.300 0 0 0 708.500 342.500ZM712.8 342.500V346.800A4.300 4.300 0 0 0 717.100 342.500Z" fill="#111"/>
<path d="M707.600 365.500L708.400 375.600Q712.800 377.800 717.200 375.600L718 365.500Z" fill="#bcbcbc" stroke="#7c7c7c" stroke-width="0.6"/>
<path d="M709.600 367.500V376.200M711.700 367.800V376.800M713.900 367.800V376.800M716 367.500V376.200" fill="none" stroke="#e4e4e4" stroke-width="0.6"/>
<ellipse cx="712.8" cy="365.2" rx="5.5" ry="2" fill="#e0e0e0" stroke="#7c7c7c" stroke-width="0.6"/>
<circle cx="712.8" cy="362.7" r="1.1" fill="#e8e8e8" stroke="#7c7c7c" stroke-width="0.5"/>
</g>
<path d="M528.5 10.6C518 10.2 506 10.4 499.5 11.6C497 12.2 496.8 13 496.8 15L497 23" fill="none" stroke="#ee1c24" stroke-width="1.4" stroke-linecap="round"/>
<path d="M489.5 16.8C492 19.5 494.5 22 497 23C500.5 21.8 504 19.8 507 17" fill="none" stroke="#ee1c24" stroke-width="1.4" stroke-linecap="round"/>
<g id="titlebar">
<rect x="3" y="2" width="5.5" height="8" fill="#f4f4f4" stroke="#9a9a9a" stroke-width="0.5"/>
<path d="M4 9L8.5 3" fill="none" stroke="#222" stroke-width="1"/>
<circle cx="8.5" cy="2.8" r="0.9" fill="#d060c0"/>
<text y="9.3" font-size="7.8" fill="#222"><tspan x="13.5" textLength="51.3" lengthAdjust="spacingAndGlyphs">Pcbnew 4.0.7 C:</tspan><tspan x="65.9" textLength="4.7" lengthAdjust="spacingAndGlyphs">₩</tspan><tspan x="70.8" textLength="15.8" lengthAdjust="spacingAndGlyphs">Users</tspan><tspan x="86.9" textLength="4.7" lengthAdjust="spacingAndGlyphs">₩</tspan><tspan x="91.8" textLength="21.9" lengthAdjust="spacingAndGlyphs">Jaehwa</tspan><tspan x="114.1" textLength="4.7" lengthAdjust="spacingAndGlyphs">₩</tspan><tspan x="118.8" textLength="26.4" lengthAdjust="spacingAndGlyphs">Desktop</tspan><tspan x="145.5" textLength="4.7" lengthAdjust="spacingAndGlyphs">₩</tspan><tspan x="150.3" textLength="40.4" lengthAdjust="spacingAndGlyphs">Kicad output</tspan><tspan x="191" textLength="4.7" lengthAdjust="spacingAndGlyphs">₩</tspan><tspan x="195.9" textLength="35.5" lengthAdjust="spacingAndGlyphs">Test_Circuit</tspan><tspan x="231.9" textLength="4.7" lengthAdjust="spacingAndGlyphs">₩</tspan><tspan x="237.1" textLength="68.5" lengthAdjust="spacingAndGlyphs">Test_Circuit.kicad_pcb</tspan></text>
<line x1="728.5" y1="6.5" x2="735" y2="6.5" stroke="#333" stroke-width="0.7" />
<rect x="754.8" y="4.2" width="4.4" height="4.4" fill="#fff" stroke="#333" stroke-width="0.7"/>
<path d="M756 4.2V3H760.4V7.4H759.2" fill="none" stroke="#333" stroke-width="0.7"/>
<path d="M782 3.2L788.4 9.6M788.4 3.2L782 9.6" fill="none" stroke="#333" stroke-width="0.8"/>
</g>
<g id="menubar">
<text x="4" y="21.8" font-size="7.4" fill="#222" textLength="24.5" lengthAdjust="spacingAndGlyphs">파일 (F)</text>
<text x="37" y="21.8" font-size="7.4" fill="#222" textLength="24.5" lengthAdjust="spacingAndGlyphs">편집 (E)</text>
<text x="70" y="21.8" font-size="7.4" fill="#222" textLength="15.5" lengthAdjust="spacingAndGlyphs">View</text>
<text x="93" y="21.8" font-size="7.4" fill="#222" textLength="17.5" lengthAdjust="spacingAndGlyphs">Place</text>
<text x="118" y="21.8" font-size="7.4" fill="#222" textLength="18" lengthAdjust="spacingAndGlyphs">Route</text>
<text x="144" y="21.8" font-size="7.4" fill="#222" textLength="36" lengthAdjust="spacingAndGlyphs">Preferences</text>
<text x="188" y="21.8" font-size="7.4" fill="#222" textLength="37" lengthAdjust="spacingAndGlyphs">Dimensions</text>
<text x="233" y="21.8" font-size="7.4" fill="#222" textLength="16.5" lengthAdjust="spacingAndGlyphs">Tools</text>
<text x="257" y="21.8" font-size="7.4" fill="#222" textLength="41.5" lengthAdjust="spacingAndGlyphs">Design Rules</text>
<text x="306" y="21.8" font-size="7.4" fill="#222" textLength="33.5" lengthAdjust="spacingAndGlyphs">도움말 (H)</text>
</g>
<g id="aux-toolbar">
<rect x="3.5" y="51.2" width="112" height="13.1" fill="#e6e6e6" stroke="#c4c4c4" stroke-width="0.8"/>
<text x="6" y="61" font-size="7.4" fill="#222" textLength="96" lengthAdjust="spacingAndGlyphs">Track: 0.250 mm (9.84 mils) *</text>
<path d="M107.8 56.65L110.0 58.85L112.2 56.65" fill="none" stroke="#555" stroke-width="0.8"/>
<rect x="116.5" y="51.2" width="174" height="13.1" fill="#e6e6e6" stroke="#c4c4c4" stroke-width="0.8"/>
<text x="119" y="61" font-size="7.4" fill="#222" textLength="155" lengthAdjust="spacingAndGlyphs">Via: 0.60 mm (23.6 mils)/ 0.40 mm (15.7 mils) *</text>
<path d="M282.8 56.65L285.0 58.85L287.2 56.65" fill="none" stroke="#555" stroke-width="0.8"/>
<rect x="320.5" y="51.2" width="115" height="13.1" fill="#e6e6e6" stroke="#c4c4c4" stroke-width="0.8"/>
<text x="323" y="61" font-size="7.4" fill="#222" textLength="95" lengthAdjust="spacingAndGlyphs">Grid: 0.2540 mm (10.00 mils)</text>
<path d="M427.8 56.65L430.0 58.85L432.2 56.65" fill="none" stroke="#555" stroke-width="0.8"/>
<rect x="443" y="51.2" width="56.3" height="13.1" fill="#e6e6e6" stroke="#c4c4c4" stroke-width="0.8"/>
<text x="445" y="61" font-size="7.4" fill="#222" textLength="29.5" lengthAdjust="spacingAndGlyphs">확대3.14</text>
<path d="M491.6 56.65L493.8 58.85L496.0 56.65" fill="none" stroke="#555" stroke-width="0.8"/>
<rect x="344.5" y="29.5" width="75" height="12" fill="#fff" stroke="#b0b0b0" stroke-width="0.8"/>
<rect x="348.5" y="31.8" width="7.6" height="7.6" fill="#840000" stroke="#555" stroke-width="0.5"/>
<text x="359.5" y="38.3" font-size="7.4" fill="#1a1a1a" textLength="38" lengthAdjust="spacingAndGlyphs">F.Cu (PgUp)</text>
<path d="M412.5 35.0L414.5 37.0L416.5 35.0" fill="none" stroke="#555" stroke-width="0.8"/>
</g>
<g id="tooltip">
<rect x="503.5" y="46.5" width="180" height="11" fill="#9a9a9a" stroke="none" stroke-width="1" opacity="0.45"/>
<rect x="502.5" y="45.5" width="180" height="11" fill="#fff" stroke="#8c8c8c" stroke-width="0.6"/>
<text x="506" y="53.6" font-size="7.2" fill="#444" textLength="172" lengthAdjust="spacingAndGlyphs">Fast access to the FreeROUTE external advanced router</text>
</g>
<g id="visibles">
<rect x="726.5" y="70" width="73.5" height="10.5" fill="url(#cap)"/>
<line x1="726" y1="70.5" x2="726" y2="394.5" stroke="#d8d8d8" stroke-width="1" />
<text x="729" y="76.8" font-size="7.2" fill="#444" textLength="26" lengthAdjust="spacingAndGlyphs">Visibles</text>
<rect x="729.7" y="83.3" width="67.5" height="307.2" fill="#e8e8e8" stroke="#c4c4c4" stroke-width="0.8"/>
<rect x="733.5" y="85.8" width="24" height="10.5" fill="#fdfdfd" stroke="#c8c8c8" stroke-width="0.7"/>
<rect x="757.5" y="86.8" width="26.5" height="9.2" fill="#ececec" stroke="#c8c8c8" stroke-width="0.7"/>
<text x="737.5" y="92.6" font-size="5.6" fill="#333" textLength="16" lengthAdjust="spacingAndGlyphs">레이어</text>
<text x="762.5" y="92.6" font-size="5.6" fill="#333" textLength="17" lengthAdjust="spacingAndGlyphs">Render</text>
<rect x="731.3" y="97" width="64.4" height="292" fill="#f0f0f0" stroke="#dadada" stroke-width="0.6"/>
<line x1="733.5" y1="96.6" x2="757.5" y2="96.6" stroke="#fdfdfd" stroke-width="1" />
<path d="M732.8 100.4L737 103.6L732.8 106.8Z" fill="#1010ff"/>
<rect x="738.6" y="99.3" width="10.3" height="8.6" fill="#e4e4e4" stroke="#c6c6c6" stroke-width="0.6"/>
<rect x="740.2" y="100.89999999999999" width="6.8" height="5.6" fill="#840000" stroke="#444" stroke-width="0.6"/>
<rect x="750.7" y="100.0" width="7.2" height="7.2" fill="#fff" stroke="#444" stroke-width="0.7"/>
<path d="M751.9 103.6L753.6 105.6L756.8 101.39999999999999" fill="none" stroke="#333" stroke-width="0.8"/>
<text x="759.8" y="105.8" font-size="5.7" fill="#222" textLength="10" lengthAdjust="spacingAndGlyphs">F.Cu</text>
<rect x="738.6" y="109.85" width="10.3" height="8.6" fill="#e4e4e4" stroke="#c6c6c6" stroke-width="0.6"/>
<rect x="740.2" y="111.44999999999999" width="6.8" height="5.6" fill="#008400" stroke="#444" stroke-width="0.6"/>
<rect x="750.7" y="110.55" width="7.2" height="7.2" fill="#fff" stroke="#444" stroke-width="0.7"/>
<path d="M751.9 114.14999999999999L753.6 116.14999999999999L756.8 111.94999999999999" fill="none" stroke="#333" stroke-width="0.8"/>
<text x="759.8" y="116.35" font-size="5.7" fill="#222" textLength="10" lengthAdjust="spacingAndGlyphs">B.Cu</text>
<rect x="738.6" y="120.39999999999999" width="10.3" height="8.6" fill="#e4e4e4" stroke="#c6c6c6" stroke-width="0.6"/>
<rect x="740.2" y="121.99999999999999" width="6.8" height="5.6" fill="#840084" stroke="#444" stroke-width="0.6"/>
<rect x="750.7" y="121.1" width="7.2" height="7.2" fill="#fff" stroke="#444" stroke-width="0.7"/>
<path d="M751.9 124.69999999999999L753.6 126.69999999999999L756.8 122.49999999999999" fill="none" stroke="#333" stroke-width="0.8"/>
<text x="759.8" y="126.89999999999999" font-size="5.7" fill="#222" textLength="18" lengthAdjust="spacingAndGlyphs">F.Adhes</text>
<rect x="738.6" y="130.95" width="10.3" height="8.6" fill="#e4e4e4" stroke="#c6c6c6" stroke-width="0.6"/>
<rect x="740.2" y="132.55" width="6.8" height="5.6" fill="#000084" stroke="#444" stroke-width="0.6"/>
<rect x="750.7" y="131.65" width="7.2" height="7.2" fill="#fff" stroke="#444" stroke-width="0.7"/>
<path d="M751.9 135.25L753.6 137.25L756.8 133.05" fill="none" stroke="#333" stroke-width="0.8"/>
<text x="759.8" y="137.45" font-size="5.7" fill="#222" textLength="18" lengthAdjust="spacingAndGlyphs">B.Adhes</text>
<rect x="738.6" y="141.5" width="10.3" height="8.6" fill="#e4e4e4" stroke="#c6c6c6" stroke-width="0.6"/>
<rect x="740.2" y="143.10000000000002" width="6.8" height="5.6" fill="#840000" stroke="#444" stroke-width="0.6"/>
<rect x="750.7" y="142.20000000000002" width="7.2" height="7.2" fill="#fff" stroke="#444" stroke-width="0.7"/>
<path d="M751.9 145.8L753.6 147.8L756.8 143.60000000000002" fill="none" stroke="#333" stroke-width="0.8"/>
<text x="759.8" y="148.0" font-size="5.7" fill="#222" textLength="16" lengthAdjust="spacingAndGlyphs">F.Paste</text>
<rect x="738.6" y="152.04999999999998" width="10.3" height="8.6" fill="#e4e4e4" stroke="#c6c6c6" stroke-width="0.6"/>
<rect x="740.2" y="153.65" width="6.8" height="5.6" fill="#00c2c2" stroke="#444" stroke-width="0.6"/>
<rect x="750.7" y="152.75" width="7.2" height="7.2" fill="#fff" stroke="#444" stroke-width="0.7"/>
<path d="M751.9 156.35L753.6 158.35L756.8 154.15" fill="none" stroke="#333" stroke-width="0.8"/>
<text x="759.8" y="158.54999999999998" font-size="5.7" fill="#222" textLength="16.5" lengthAdjust="spacingAndGlyphs">B.Paste</text>
<rect x="738.6" y="162.6" width="10.3" height="8.6" fill="#e4e4e4" stroke="#c6c6c6" stroke-width="0.6"/>
<rect x="740.2" y="164.20000000000002" width="6.8" height="5.6" fill="#008484" stroke="#444" stroke-width="0.6"/>
<rect x="750.7" y="163.3" width="7.2" height="7.2" fill="#fff" stroke="#444" stroke-width="0.7"/>
<path d="M751.9 166.9L753.6 168.9L756.8 164.70000000000002" fill="none" stroke="#333" stroke-width="0.8"/>
<text x="759.8" y="169.1" font-size="5.7" fill="#222" textLength="14.5" lengthAdjust="spacingAndGlyphs">F.SilkS</text>
<rect x="738.6" y="173.14999999999998" width="10.3" height="8.6" fill="#e4e4e4" stroke="#c6c6c6" stroke-width="0.6"/>
<rect x="740.2" y="174.75" width="6.8" height="5.6" fill="#840084" stroke="#444" stroke-width="0.6"/>
<rect x="750.7" y="173.85" width="7.2" height="7.2" fill="#fff" stroke="#444" stroke-width="0.7"/>
<path d="M751.9 177.45L753.6 179.45L756.8 175.25" fill="none" stroke="#333" stroke-width="0.8"/>
<text x="759.8" y="179.64999999999998" font-size="5.7" fill="#222" textLength="15" lengthAdjust="spacingAndGlyphs">B.SilkS</text>
<rect x="738.6" y="183.7" width="10.3" height="8.6" fill="#e4e4e4" stroke="#c6c6c6" stroke-width="0.6"/>
<rect x="740.2" y="185.3" width="6.8" height="5.6" fill="#840084" stroke="#444" stroke-width="0.6"/>
<rect x="750.7" y="184.4" width="7.2" height="7.2" fill="#fff" stroke="#444" stroke-width="0.7"/>
<path d="M751.9 188.0L753.6 190.0L756.8 185.8" fill="none" stroke="#333" stroke-width="0.8"/>
<text x="759.8" y="190.2" font-size="5.7" fill="#222" textLength="16" lengthAdjust="spacingAndGlyphs">F.Mask</text>
<rect x="738.6" y="194.25" width="10.3" height="8.6" fill="#e4e4e4" stroke="#c6c6c6" stroke-width="0.6"/>
<rect x="740.2" y="195.85000000000002" width="6.8" height="5.6" fill="#848400" stroke="#444" stroke-width="0.6"/>
<rect x="750.7" y="194.95000000000002" width="7.2" height="7.2" fill="#fff" stroke="#444" stroke-width="0.7"/>
<path d="M751.9 198.55L753.6 200.55L756.8 196.35000000000002" fill="none" stroke="#333" stroke-width="0.8"/>
<text x="759.8" y="200.75" font-size="5.7" fill="#222" textLength="16.5" lengthAdjust="spacingAndGlyphs">B.Mask</text>
<rect x="738.6" y="204.79999999999998" width="10.3" height="8.6" fill="#e4e4e4" stroke="#c6c6c6" stroke-width="0.6"/>
<rect x="740.2" y="206.4" width="6.8" height="5.6" fill="#c2c2c2" stroke="#444" stroke-width="0.6"/>
<rect x="750.7" y="205.5" width="7.2" height="7.2" fill="#fff" stroke="#444" stroke-width="0.7"/>
<path d="M751.9 209.1L753.6 211.1L756.8 206.9" fill="none" stroke="#333" stroke-width="0.8"/>
<text x="759.8" y="211.29999999999998" font-size="5.7" fill="#222" textLength="24" lengthAdjust="spacingAndGlyphs">Dwgs.User</text>
<rect x="738.6" y="215.35" width="10.3" height="8.6" fill="#e4e4e4" stroke="#c6c6c6" stroke-width="0.6"/>
<rect x="740.2" y="216.95000000000002" width="6.8" height="5.6" fill="#000084" stroke="#444" stroke-width="0.6"/>
<rect x="750.7" y="216.05" width="7.2" height="7.2" fill="#fff" stroke="#444" stroke-width="0.7"/>
<path d="M751.9 219.65L753.6 221.65L756.8 217.45000000000002" fill="none" stroke="#333" stroke-width="0.8"/>
<text x="759.8" y="221.85" font-size="5.7" fill="#222" textLength="24" lengthAdjust="spacingAndGlyphs">Cmts.User</text>
<rect x="738.6" y="225.89999999999998" width="10.3" height="8.6" fill="#e4e4e4" stroke="#c6c6c6" stroke-width="0.6"/>
<rect x="740.2" y="227.5" width="6.8" height="5.6" fill="#008400" stroke="#444" stroke-width="0.6"/>
<rect x="750.7" y="226.6" width="7.2" height="7.2" fill="#fff" stroke="#444" stroke-width="0.7"/>
<path d="M751.9 230.2L753.6 232.2L756.8 228.0" fill="none" stroke="#333" stroke-width="0.8"/>
<text x="759.8" y="232.39999999999998" font-size="5.7" fill="#222" textLength="23.5" lengthAdjust="spacingAndGlyphs">Eco1.User</text>
<rect x="738.6" y="236.45" width="10.3" height="8.6" fill="#e4e4e4" stroke="#c6c6c6" stroke-width="0.6"/>
<rect x="740.2" y="238.05" width="6.8" height="5.6" fill="#c2c200" stroke="#444" stroke-width="0.6"/>
<rect x="750.7" y="237.15" width="7.2" height="7.2" fill="#fff" stroke="#444" stroke-width="0.7"/>
<path d="M751.9 240.75L753.6 242.75L756.8 238.55" fill="none" stroke="#333" stroke-width="0.8"/>
<text x="759.8" y="242.95" font-size="5.7" fill="#222" textLength="24" lengthAdjust="spacingAndGlyphs">Eco2.User</text>
<rect x="738.6" y="247.0" width="10.3" height="8.6" fill="#e4e4e4" stroke="#c6c6c6" stroke-width="0.6"/>
<rect x="740.2" y="248.60000000000002" width="6.8" height="5.6" fill="#c2c200" stroke="#444" stroke-width="0.6"/>
<rect x="750.7" y="247.70000000000002" width="7.2" height="7.2" fill="#fff" stroke="#444" stroke-width="0.7"/>
<path d="M751.9 251.3L753.6 253.3L756.8 249.10000000000002" fill="none" stroke="#333" stroke-width="0.8"/>
<text x="759.8" y="253.5" font-size="5.7" fill="#222" textLength="24" lengthAdjust="spacingAndGlyphs">Edge.Cuts</text>
<rect x="738.6" y="257.55" width="10.3" height="8.6" fill="#e4e4e4" stroke="#c6c6c6" stroke-width="0.6"/>
<rect x="740.2" y="259.15000000000003" width="6.8" height="5.6" fill="#c200c2" stroke="#444" stroke-width="0.6"/>
<rect x="750.7" y="258.25" width="7.2" height="7.2" fill="#fff" stroke="#444" stroke-width="0.7"/>
<path d="M751.9 261.85L753.6 263.85L756.8 259.65000000000003" fill="none" stroke="#333" stroke-width="0.8"/>
<text x="759.8" y="264.05" font-size="5.7" fill="#222" textLength="16" lengthAdjust="spacingAndGlyphs">Margin</text>
<rect x="738.6" y="268.09999999999997" width="10.3" height="8.6" fill="#e4e4e4" stroke="#c6c6c6" stroke-width="0.6"/>
<rect x="740.2" y="269.7" width="6.8" height="5.6" fill="#848484" stroke="#444" stroke-width="0.6"/>
<rect x="750.7" y="268.79999999999995" width="7.2" height="7.2" fill="#fff" stroke="#444" stroke-width="0.7"/>
<path d="M751.9 272.4L753.6 274.4L756.8 270.2" fill="none" stroke="#333" stroke-width="0.8"/>
<text x="759.8" y="274.59999999999997" font-size="5.7" fill="#222" textLength="16.5" lengthAdjust="spacingAndGlyphs">F.CrtYd</text>
<rect x="738.6" y="278.65000000000003" width="10.3" height="8.6" fill="#e4e4e4" stroke="#c6c6c6" stroke-width="0.6"/>
<rect x="740.2" y="280.25000000000006" width="6.8" height="5.6" fill="#c2c200" stroke="#444" stroke-width="0.6"/>
<rect x="750.7" y="279.35" width="7.2" height="7.2" fill="#fff" stroke="#444" stroke-width="0.7"/>
<path d="M751.9 282.95000000000005L753.6 284.95000000000005L756.8 280.75000000000006" fill="none" stroke="#333" stroke-width="0.8"/>
<text x="759.8" y="285.15000000000003" font-size="5.7" fill="#222" textLength="17" lengthAdjust="spacingAndGlyphs">B.CrtYd</text>
<rect x="738.6" y="289.2" width="10.3" height="8.6" fill="#e4e4e4" stroke="#c6c6c6" stroke-width="0.6"/>
<rect x="740.2" y="290.8" width="6.8" height="5.6" fill="#c2c200" stroke="#444" stroke-width="0.6"/>
<rect x="750.7" y="289.9" width="7.2" height="7.2" fill="#fff" stroke="#444" stroke-width="0.7"/>
<path d="M751.9 293.5L753.6 295.5L756.8 291.3" fill="none" stroke="#333" stroke-width="0.8"/>
<text x="759.8" y="295.7" font-size="5.7" fill="#222" textLength="12" lengthAdjust="spacingAndGlyphs">F.Fab</text>
<rect x="738.6" y="299.75" width="10.3" height="8.6" fill="#e4e4e4" stroke="#c6c6c6" stroke-width="0.6"/>
<rect x="740.2" y="301.35" width="6.8" height="5.6" fill="#840000" stroke="#444" stroke-width="0.6"/>
<rect x="750.7" y="300.45" width="7.2" height="7.2" fill="#fff" stroke="#444" stroke-width="0.7"/>
<path d="M751.9 304.05L753.6 306.05L756.8 301.85" fill="none" stroke="#333" stroke-width="0.8"/>
<text x="759.8" y="306.25" font-size="5.7" fill="#222" textLength="12.5" lengthAdjust="spacingAndGlyphs">B.Fab</text>
</g>
<g id="msgpanel">
<line x1="0" y1="393.8" x2="800" y2="393.8" stroke="#b4b4b4" stroke-width="0.8" />
<line x1="0" y1="412.4" x2="800" y2="412.4" stroke="#b8b8b8" stroke-width="0.8" />
<line x1="0.5" y1="394" x2="0.5" y2="412" stroke="#b8b8b8" stroke-width="0.8" />
<text x="7" y="402" font-size="7.6" fill="#1e7a46" textLength="13.5" lengthAdjust="spacingAndGlyphs">패드</text>
<text x="7" y="410.7" font-size="7.8" fill="#1e7a46" textLength="8" lengthAdjust="spacingAndGlyphs">12</text>
<text x="36" y="402" font-size="7.6" fill="#1e7a46" textLength="13.5" lengthAdjust="spacingAndGlyphs">비아</text>
<text x="36" y="410.7" font-size="7.8" fill="#1e7a46" textLength="4" lengthAdjust="spacingAndGlyphs">0</text>
<text x="70" y="402" font-size="7.6" fill="#1e7a46" textLength="50" lengthAdjust="spacingAndGlyphs">Track Segments</text>
<text x="70" y="410.7" font-size="7.8" fill="#1e7a46" textLength="8" lengthAdjust="spacingAndGlyphs">19</text>
<text x="141" y="402" font-size="7.6" fill="#176a7a" textLength="13.5" lengthAdjust="spacingAndGlyphs">노드</text>
<text x="141" y="410.7" font-size="7.8" fill="#176a7a" textLength="8" lengthAdjust="spacingAndGlyphs">12</text>
<text x="169" y="402" font-size="7.6" fill="#8c1430" textLength="13.5" lengthAdjust="spacingAndGlyphs">네트</text>
<text x="169" y="410.7" font-size="7.8" fill="#8c1430" textLength="4" lengthAdjust="spacingAndGlyphs">5</text>
<text x="204" y="402" font-size="7.6" fill="#1a6a1a" textLength="13.5" lengthAdjust="spacingAndGlyphs">연결</text>
<text x="204" y="410.7" font-size="7.8" fill="#1a6a1a" textLength="4" lengthAdjust="spacingAndGlyphs">8</text>
<text x="238" y="402" font-size="7.6" fill="#2a6a1a" textLength="39.5" lengthAdjust="spacingAndGlyphs">Connections</text>
<text x="238" y="410.7" font-size="7.8" fill="#2a6a1a" textLength="4" lengthAdjust="spacingAndGlyphs">6</text>
<text x="298" y="402" font-size="7.6" fill="#2a2aa0" textLength="41.5" lengthAdjust="spacingAndGlyphs">Unconnected</text>
<text x="298" y="410.7" font-size="7.8" fill="#2a2aa0" textLength="4" lengthAdjust="spacingAndGlyphs">2</text>
</g>
<g id="statusbar">
<line x1="334" y1="414" x2="334" y2="425.5" stroke="#d6d6d6" stroke-width="0.8" />
<line x1="377" y1="414" x2="377" y2="425.5" stroke="#d6d6d6" stroke-width="0.8" />
<line x1="490" y1="414" x2="490" y2="425.5" stroke="#d6d6d6" stroke-width="0.8" />
<line x1="667" y1="414" x2="667" y2="425.5" stroke="#d6d6d6" stroke-width="0.8" />
<line x1="693" y1="414" x2="693" y2="425.5" stroke="#d6d6d6" stroke-width="0.8" />
<text x="338" y="422.8" font-size="6.6" fill="#222" textLength="20" lengthAdjust="spacingAndGlyphs">Z 3.14</text>
<text x="380" y="422.8" font-size="6.6" fill="#222" textLength="45" lengthAdjust="spacingAndGlyphs">X 191.262000</text>
<text x="431" y="422.8" font-size="6.6" fill="#222" textLength="40" lengthAdjust="spacingAndGlyphs">Y 81.534000</text>
<text x="495" y="422.8" font-size="6.6" fill="#222" textLength="48" lengthAdjust="spacingAndGlyphs">dx 191.262000</text>
<text x="548" y="422.8" font-size="6.6" fill="#222" textLength="44" lengthAdjust="spacingAndGlyphs">dy 81.534000</text>
<text x="597" y="422.8" font-size="6.6" fill="#222" textLength="40" lengthAdjust="spacingAndGlyphs">dist 207.916</text>
<text x="671" y="422.8" font-size="6.6" fill="#222" textLength="12" lengthAdjust="spacingAndGlyphs">mm</text>
</g>
<g id="taskbar">
<rect x="9" y="433.8" width="4.3" height="3.8" fill="#f0f0f0"/>
<rect x="13.9" y="433" width="5.4" height="4.6" fill="#f0f0f0"/>
<rect x="9" y="438.3" width="4.3" height="3.8" fill="#f0f0f0"/>
<rect x="13.9" y="438.3" width="5.4" height="4.6" fill="#f0f0f0"/>
<circle cx="44.5" cy="436.5" r="2.6" fill="none" stroke="#e8e8e8" stroke-width="0.8"/>
<line x1="42.6" y1="438.5" x2="38.8" y2="442.3" stroke="#e8e8e8" stroke-width="0.9" />
<rect x="67.3" y="434.5" width="6.4" height="7.4" fill="none" stroke="#e0e0e0" stroke-width="0.8"/>
<path d="M66 436H65V440.6H66M75 436H76V440.6H75" fill="none" stroke="#e0e0e0" stroke-width="0.7"/>
<text x="100.3" y="444.6" font-size="20" fill="#28b4f0" textLength="11.5" lengthAdjust="spacingAndGlyphs" text-anchor="middle" font-weight="bold">e</text>
<ellipse cx="100.5" cy="437.5" rx="7.2" ry="2.6" fill="none" stroke="#f0c020" stroke-width="0.9" transform="rotate(-35 100.5 437.5)"/>
<circle cx="128.6" cy="438" r="6" fill="#e8e8e8"/>
<path d="M128.6 438L123.4 435A6 6 0 0 1 133.8 435Z" fill="#e04030"/>
<path d="M128.6 438L133.8 435A6 6 0 0 1 128.6 444Z" fill="#f4c020"/>
<path d="M128.6 438L128.6 444A6 6 0 0 1 123.4 435Z" fill="#30a050"/>
<circle cx="128.6" cy="438" r="2.9" fill="#fff"/>
<circle cx="128.6" cy="438" r="2.2" fill="#4a8af0"/>
<rect x="151.5" y="433" width="11.5" height="9" fill="#f8d060"/>
<rect x="151.5" y="432" width="5" height="2" fill="#e8b830"/>
<rect x="153.5" y="437.5" width="7.5" height="4.5" fill="#40a8f0"/>
<rect x="155.5" y="439.5" width="3.5" height="2.5" fill="#f8d060"/>
<rect x="172" y="426.5" width="27.5" height="23.5" fill="#333"/>
<rect x="180" y="431.5" width="12" height="13" fill="#f4e6d0" stroke="#d8a020" stroke-width="0.9"/>
<path d="M184 433V443M182 439H190M186.5 441.5H190.5V438" fill="none" stroke="#b04020" stroke-width="0.8"/>
<path d="M189.5 431L193 434.5V431Z" fill="#e8b020"/>
<ellipse cx="213.5" cy="439" rx="5.6" ry="4.2" fill="#e0e4ea" stroke="#8aa0c0" stroke-width="0.6"/>
<circle cx="210.5" cy="438" r="0.9" fill="#e03030"/>
<circle cx="213" cy="436.6" r="0.9" fill="#30a040"/>
<circle cx="215.8" cy="437.6" r="0.9" fill="#3060e0"/>
<circle cx="211" cy="440.4" r="0.9" fill="#f0c020"/>
<line x1="214" y1="443" x2="219.5" y2="432.5" stroke="#d08030" stroke-width="1.1" />
<rect x="117.5" y="449" width="23" height="1" fill="#e8f0a0"/>
<rect x="146.5" y="449" width="23" height="1" fill="#e8f0a0"/>
<rect x="172" y="449" width="27.5" height="1" fill="#e8f0a0"/>
<rect x="203" y="449" width="23" height="1" fill="#e8f0a0"/>
<path d="M656.8 440L660.1 436.7L663.4 440" fill="none" stroke="#eee" stroke-width="0.9"/>
<rect x="671" y="436" width="7.5" height="3.6" fill="none" stroke="#eee" stroke-width="0.7"/>
<rect x="672" y="436.8" width="3.5" height="2" fill="#eee"/>
<rect x="669.8" y="435" width="1.6" height="1.6" fill="#eee"/>
<path d="M689.4 441.5A2.6 2.6 0 0 1 692 438.9" fill="none" stroke="#eee" stroke-width="0.9"/>
<path d="M687.4 441.5A4.6 4.6 0 0 1 692 436.9" fill="none" stroke="#eee" stroke-width="0.9"/>
<path d="M685.4 441.5A6.6 6.6 0 0 1 692 434.9" fill="none" stroke="#eee" stroke-width="0.9"/>
<circle cx="691.3" cy="440.9" r="0.8" fill="#eee"/>
<path d="M697.5 437H699L701 435V441.5L699 439.5H697.5Z" fill="none" stroke="#eee" stroke-width="0.7"/>
<path d="M702.5 436.5A2.5 2.5 0 0 1 702.5 440M703.8 435.3A4 4 0 0 1 703.8 441.2" fill="none" stroke="#eee" stroke-width="0.6"/>
<text x="715.5" y="442.5" font-size="12" fill="#f4f4f4" textLength="7.5" lengthAdjust="spacingAndGlyphs" text-anchor="middle">A</text>
<text x="745.5" y="435.5" font-size="7.2" fill="#f4f4f4" textLength="31" lengthAdjust="spacingAndGlyphs" text-anchor="middle">오후 8:56</text>
<text x="745.5" y="445.6" font-size="7.2" fill="#f4f4f4" textLength="39" lengthAdjust="spacingAndGlyphs" text-anchor="middle">2018-02-06</text>
<path d="M777 433.5H785.5V440H782.5L781 442L781 440H777Z" fill="none" stroke="#eee" stroke-width="0.8"/>
</g>
<path d="M29.6 386.4L27.4 388.5L29.6 390.6" fill="none" stroke="#444" stroke-width="1"/>
<path d="M684.6 386.4L686.8 388.5L684.6 390.6" fill="none" stroke="#444" stroke-width="1"/>
<path d="M692.7 77.2L695.3 74.6L697.9 77.2" fill="none" stroke="#444" stroke-width="1.1"/>
<path d="M692.7 376.6L695.3 379.2L697.9 376.6" fill="none" stroke="#444" stroke-width="1.1"/>
</svg>
</body></html>
